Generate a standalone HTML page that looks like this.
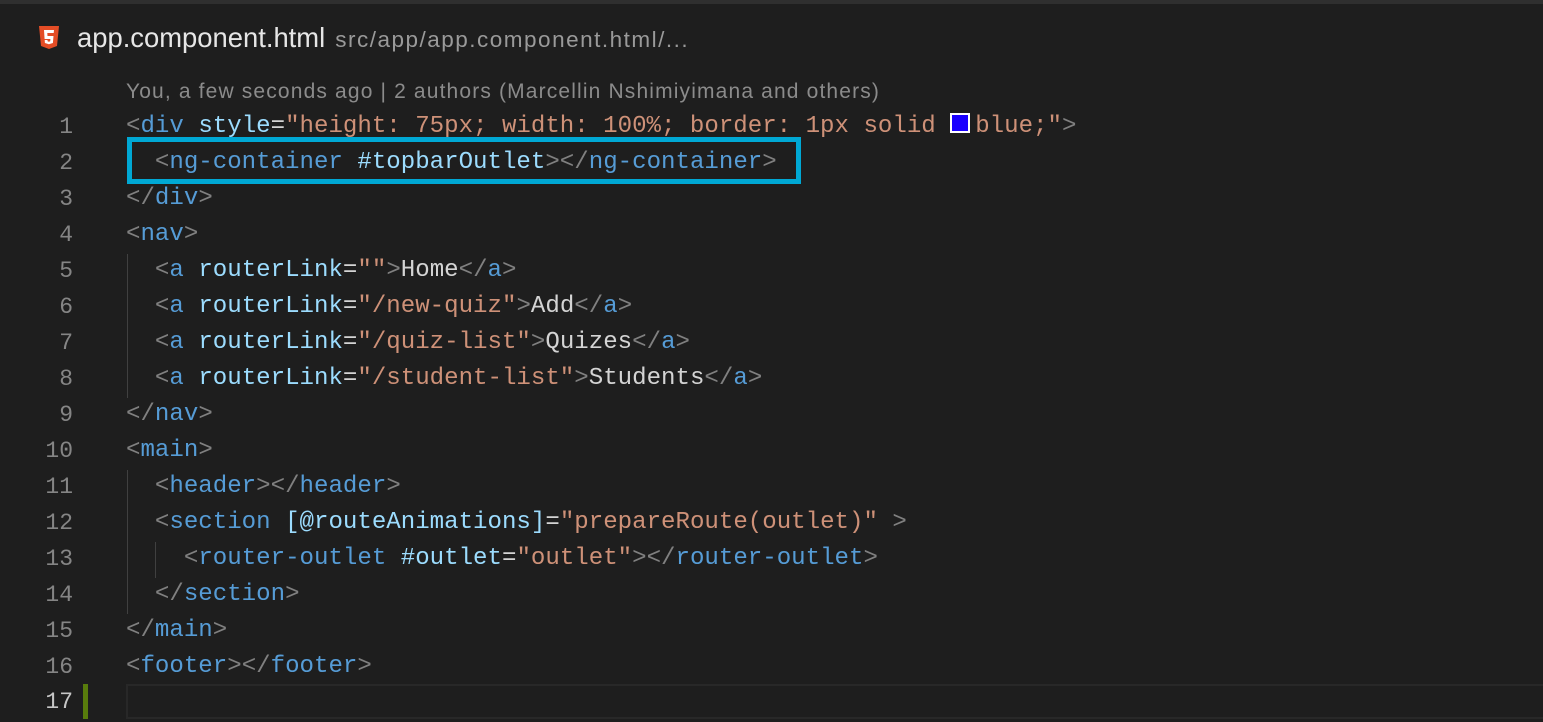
<!DOCTYPE html>
<html><head><meta charset="utf-8"><style>
body{margin:0;width:1543px;height:722px;background:#1e1e1e;overflow:hidden;position:relative;font-family:"Liberation Sans",sans-serif}
.top{position:absolute;left:0;top:0;width:1543px;height:4px;background:#2f2f2f}
.title{position:absolute;left:77px;top:22px;font-size:27.4px;color:#e6e6e6;white-space:nowrap}
.title span{color:#9a9a9a;font-size:22.5px;margin-left:10px;letter-spacing:1.5px}
.blame{position:absolute;left:126px;top:80px;font-size:21px;color:#8b8b8b;white-space:nowrap;letter-spacing:1.15px}
.ln{position:absolute;left:0;width:73px;text-align:right;font-family:"Liberation Mono",monospace;font-size:23px;color:#858585;line-height:36px}
.code{position:absolute;left:126px;font-family:"Liberation Mono",monospace;font-size:24.1px;line-height:36px;white-space:pre;color:#d4d4d4}
.p{color:#808080}.t{color:#569cd6}.a{color:#9cdcfe}.s{color:#ce9178}
.g{position:absolute;width:1px;background:#404040}
.sw{display:inline-block;width:16px;height:16px;border:2px solid #fff;background:#1a00ff;vertical-align:-1px;margin-right:5px}
</style></head><body>
<div class="top"></div>
<svg style="position:absolute;left:38px;top:26px" width="22" height="24" viewBox="0 0 22 24"><path d="M1 0h20l-2 20-8 3-8-3z" fill="#e44d26"/><path d="M6 4h10l-.3 3H9.3l.2 3h6l-.6 7-4 1.3-4-1.3-.2-3h2.8l.1 1.3 1.3.4 1.3-.4.2-2.3H6.6z" fill="#fff"/></svg>
<div class="title">app.component.html<span>src/app/app.component.html/...</span></div>
<div class="blame">You, a few seconds ago | 2 authors (Marcellin Nshimiyimana and others)</div>

<div class="g" style="left:127px;top:146px;height:36px"></div>
<div class="g" style="left:127px;top:254px;height:144px"></div>
<div class="g" style="left:127px;top:470px;height:144px"></div>
<div class="g" style="left:155px;top:542px;height:36px"></div>

<div class="ln" style="top:109px">1</div>
<div class="ln" style="top:145px">2</div>
<div class="ln" style="top:181px">3</div>
<div class="ln" style="top:217px">4</div>
<div class="ln" style="top:253px">5</div>
<div class="ln" style="top:289px">6</div>
<div class="ln" style="top:325px">7</div>
<div class="ln" style="top:361px">8</div>
<div class="ln" style="top:397px">9</div>
<div class="ln" style="top:433px">10</div>
<div class="ln" style="top:469px">11</div>
<div class="ln" style="top:505px">12</div>
<div class="ln" style="top:541px">13</div>
<div class="ln" style="top:577px">14</div>
<div class="ln" style="top:613px">15</div>
<div class="ln" style="top:649px">16</div>
<div class="ln" style="top:684px;color:#c6c6c6">17</div>

<div style="position:absolute;left:83px;top:684px;width:5px;height:35px;background:#587c0c"></div>
<div style="position:absolute;left:126px;top:684px;width:1417px;height:31px;border:2px solid #282828;border-right:none"></div>
<div style="position:absolute;left:127px;top:137px;width:664px;height:37px;border:5px solid #00a8d4"></div>

<div class="code" style="top:109px"><span class="p">&lt;</span><span class="t">div</span> <span class="a">style</span>=<span class="s">"height: 75px; width: 100%; border: 1px solid <span class="sw"></span>blue;"</span><span class="p">&gt;</span></div>
<div class="code" style="top:145px">  <span class="p">&lt;</span><span class="t">ng-container</span> <span class="a">#topbarOutlet</span><span class="p">&gt;&lt;/</span><span class="t">ng-container</span><span class="p">&gt;</span></div>
<div class="code" style="top:181px"><span class="p">&lt;/</span><span class="t">div</span><span class="p">&gt;</span></div>
<div class="code" style="top:217px"><span class="p">&lt;</span><span class="t">nav</span><span class="p">&gt;</span></div>
<div class="code" style="top:253px">  <span class="p">&lt;</span><span class="t">a</span> <span class="a">routerLink</span>=<span class="s">""</span><span class="p">&gt;</span>Home<span class="p">&lt;/</span><span class="t">a</span><span class="p">&gt;</span></div>
<div class="code" style="top:289px">  <span class="p">&lt;</span><span class="t">a</span> <span class="a">routerLink</span>=<span class="s">"/new-quiz"</span><span class="p">&gt;</span>Add<span class="p">&lt;/</span><span class="t">a</span><span class="p">&gt;</span></div>
<div class="code" style="top:325px">  <span class="p">&lt;</span><span class="t">a</span> <span class="a">routerLink</span>=<span class="s">"/quiz-list"</span><span class="p">&gt;</span>Quizes<span class="p">&lt;/</span><span class="t">a</span><span class="p">&gt;</span></div>
<div class="code" style="top:361px">  <span class="p">&lt;</span><span class="t">a</span> <span class="a">routerLink</span>=<span class="s">"/student-list"</span><span class="p">&gt;</span>Students<span class="p">&lt;/</span><span class="t">a</span><span class="p">&gt;</span></div>
<div class="code" style="top:397px"><span class="p">&lt;/</span><span class="t">nav</span><span class="p">&gt;</span></div>
<div class="code" style="top:433px"><span class="p">&lt;</span><span class="t">main</span><span class="p">&gt;</span></div>
<div class="code" style="top:469px">  <span class="p">&lt;</span><span class="t">header</span><span class="p">&gt;&lt;/</span><span class="t">header</span><span class="p">&gt;</span></div>
<div class="code" style="top:505px">  <span class="p">&lt;</span><span class="t">section</span> <span class="a">[@routeAnimations]</span>=<span class="s">"prepareRoute(outlet)"</span> <span class="p">&gt;</span></div>
<div class="code" style="top:541px">    <span class="p">&lt;</span><span class="t">router-outlet</span> <span class="a">#outlet</span>=<span class="s">"outlet"</span><span class="p">&gt;&lt;/</span><span class="t">router-outlet</span><span class="p">&gt;</span></div>
<div class="code" style="top:577px">  <span class="p">&lt;/</span><span class="t">section</span><span class="p">&gt;</span></div>
<div class="code" style="top:613px"><span class="p">&lt;/</span><span class="t">main</span><span class="p">&gt;</span></div>
<div class="code" style="top:649px"><span class="p">&lt;</span><span class="t">footer</span><span class="p">&gt;&lt;/</span><span class="t">footer</span><span class="p">&gt;</span></div>
</body></html>
